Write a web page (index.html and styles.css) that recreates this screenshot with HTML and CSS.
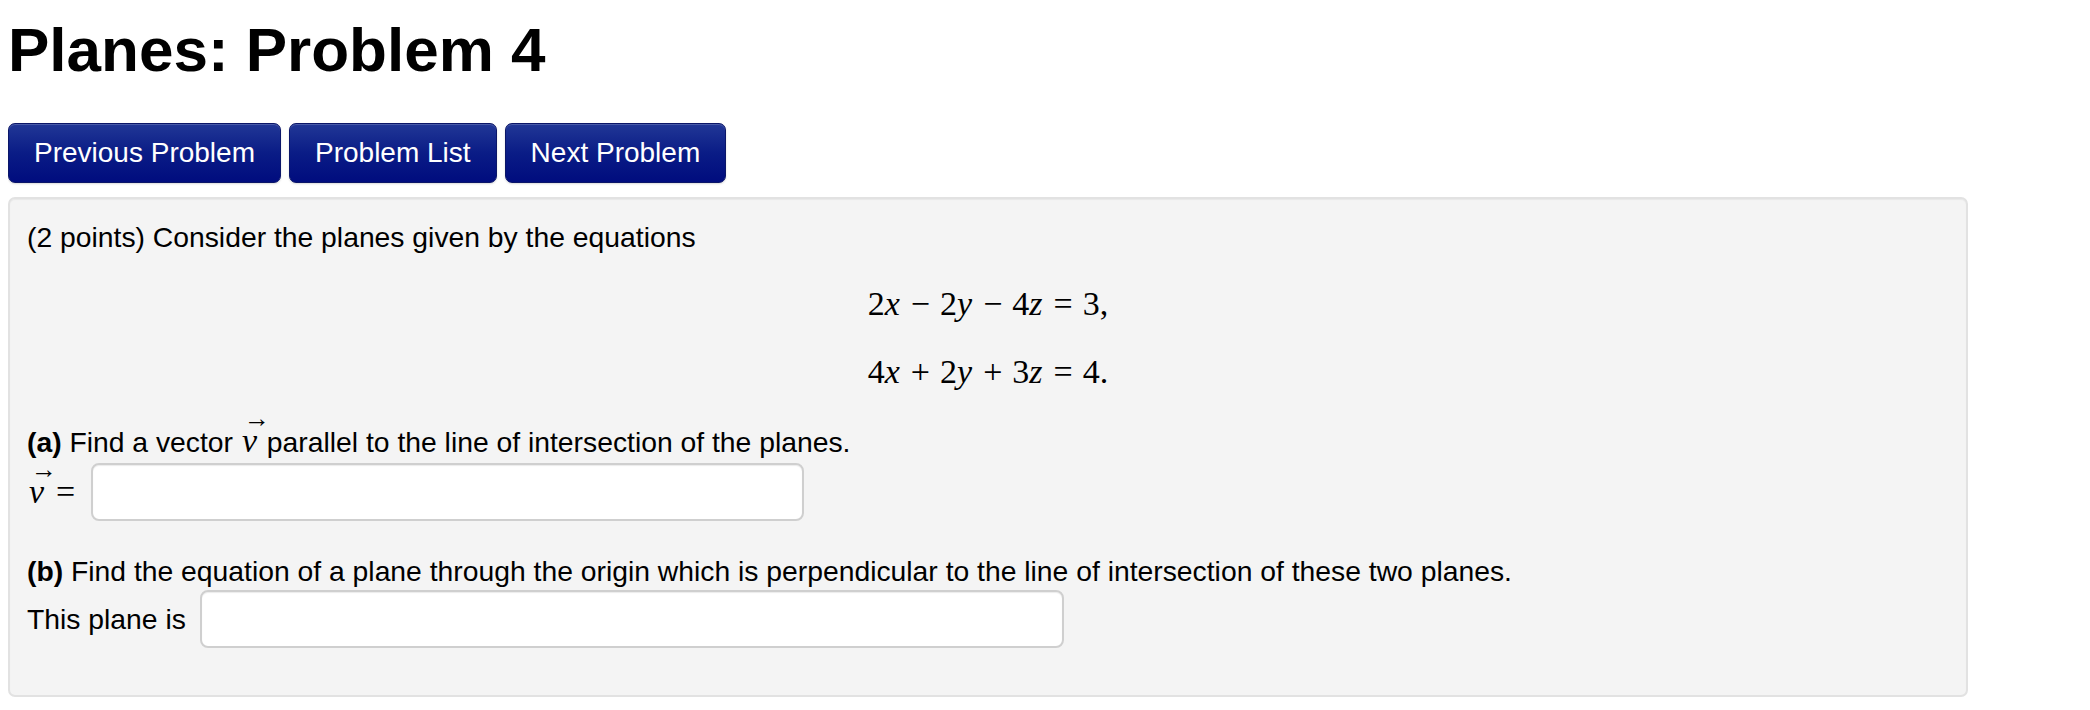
FILE: index.html
```html
<!DOCTYPE html>
<html lang="en">
<head>
    <meta charset="UTF-8">
    <meta name="viewport" content="width=device-width, initial-scale=1.0">
	<link rel="stylesheet" href="styles.css">
</head>
<body>
<h1 class="title">Planes: Problem 4</h1>
<div class="nav">
	<a class="nav-btn" href="#">Previous Problem</a>
	<a class="nav-btn" href="#">Problem List</a>
	<a class="nav-btn" href="#">Next Problem</a>
</div>
<div class="problem">
	<p class="line">(2 points) Consider the planes given by the equations</p>
	<div class="eqns">
		<div class="eq">
			<span>2</span><i>x</i><span class="op">&minus;</span><span>2</span><i>y</i><span class="op">&minus;</span><span>4</span><i>z</i><span class="rel">=</span><span>3,</span>
		</div>
		<div class="eq">
			<span>4</span><i>x</i><span class="op">+</span><span>2</span><i>y</i><span class="op">+</span><span>3</span><i>z</i><span class="rel">=</span><span>4.</span>
		</div>
	</div>
	<p class="line"><b>(a)</b> Find a vector <span class="vec">v</span> parallel to the line of intersection of the planes.</p>
	<div class="answer">
		<span class="math"><span class="vec">v</span><span class="rel">=</span></span>
		<input type="text" class="ans-box ans-a">
	</div>
	<p class="line part-b"><b>(b)</b> Find the equation of a plane through the origin which is perpendicular to the line of intersection of these two planes.</p>
	<div class="answer answer-b">
		<span>This plane is</span>
		<input type="text" class="ans-box ans-b">
	</div>
</div>
</body>
</html>
```

FILE: styles.css
```css
body{
	margin:8px;
	font-family:"Liberation Sans", Arial, Helvetica, sans-serif;
	color:#000;
	background:#fff;
}
.title{
	margin:7px 0 0;
	font-size:62px;
	line-height:70px;
	font-weight:bold;
}
.nav{
	display:flex;
	gap:8px;
	margin-top:38px;
}
.nav-btn{
	display:block;
	height:60px;
	box-sizing:border-box;
	padding:0 25px;
	line-height:58px;
	font-size:28px;
	color:#fff;
	text-decoration:none;
	border:1px solid #0b1668;
	border-radius:7px;
	background:linear-gradient(#213796, #0a1c86 50%, #000c7e);
	box-shadow:inset 0 1px 0 rgba(255,255,255,0.18), 0 1px 2px rgba(0,0,0,0.15);
}
.problem{
	box-sizing:border-box;
	width:1960px;
	height:500px;
	margin-top:14px;
	padding:18px 17px;
	background:#f4f4f4;
	border:2px solid #e2e2e2;
	border-radius:7px;
	box-shadow:inset 0 1px 1px rgba(0,0,0,0.05);
	font-size:28.3px;
}
.line{
	margin:0;
	line-height:40px;
}
.eqns{
	margin:13px 0 16px;
	font-family:"Liberation Serif", "Times New Roman", serif;
	font-size:34px;
	line-height:68px;
}
.eq{
	text-align:center;
}
.eq i{
	margin-right:1px;
}
.op, .rel{
	margin:0 10px;
}
.vec{
	position:relative;
	display:inline-block;
	font-family:"Liberation Serif", "Times New Roman", serif;
	font-style:italic;
	font-size:34px;
	line-height:28px;
	padding:0 2px 0 1px;
}
.vec::before{
	content:"\2192";
	position:absolute;
	left:3px;
	top:-22px;
	font-style:normal;
	font-size:26px;
}
.answer{
	display:flex;
	align-items:center;
	margin-top:1px;
}
.math{
	font-family:"Liberation Serif", "Times New Roman", serif;
	font-size:34px;
	padding-left:1px;
}
.math .rel{
	margin:0 0 0 10px;
}
.ans-box{
	box-sizing:border-box;
	height:58px;
	margin:0 0 0 16px;
	background:#fff;
	border:2px solid #cfcfcf;
	border-radius:8px;
	box-shadow:inset 0 1px 1px rgba(0,0,0,0.08);
}
.ans-a{
	width:713px;
}
.ans-b{
	width:864px;
	margin-left:14px;
}
.part-b{
	margin-top:30px;
}
.answer-b{
	margin-top:-1px;
}
```
